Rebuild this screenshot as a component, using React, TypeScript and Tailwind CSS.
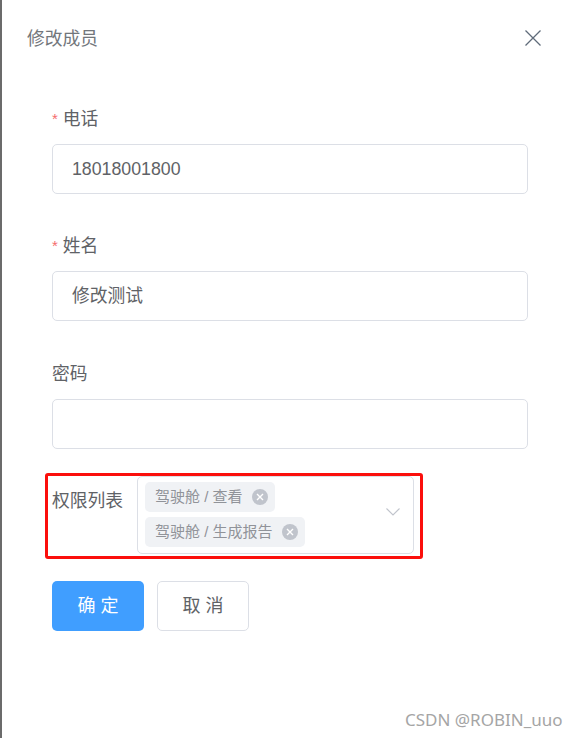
const cjk = "font-['Liberation_Sans','Noto_Sans_CJK_SC',sans-serif]";

function Field({ label, required, value }: { label: string; required?: boolean; value?: string }) {
  return (
    <div className="flex flex-col">
      <div className="flex h-[50px] items-center text-[17.75px] text-[#606266]">
        {required && <span className="mr-[5px] text-[15px] text-[#f56c6c]">*</span>}
        <span>{label}</span>
      </div>
      <div className="flex h-[50px] items-center rounded-[5px] border border-[#dcdfe6] px-[19px] text-[17.75px] text-[#606266]">
        {value}
      </div>
    </div>
  );
}

function Tag({ text }: { text: string }) {
  return (
    <div className="flex h-[30px] items-center self-start rounded-[5px] bg-[#f0f2f5] pl-[10px] pr-[7px] text-[15px] text-[#909399]">
      <span>{text}</span>
      <span className="ml-[9px] flex h-[16px] w-[16px] items-center justify-center rounded-full bg-[#c0c4cc]">
        <svg viewBox="0 0 10 10" className="h-[10px] w-[10px]" fill="none" stroke="#ffffff" strokeWidth="1.4">
          <path d="M2 2 L8 8 M8 2 L2 8" />
        </svg>
      </span>
    </div>
  );
}

export default function App() {
  return (
    <div className={`relative h-[738px] w-[578px] overflow-hidden border-l-2 border-[#6b6b6b] bg-white ${cjk}`}>
      <div className="flex h-[77px] items-center justify-between pl-[25px] pr-[37px]">
        <span className="mt-[1px] text-[17.75px] text-[#72767b]">修改成员</span>
        <svg viewBox="0 0 16 16" className="mb-[1px] h-[16px] w-[16px]" fill="none" stroke="#5f6b7a" strokeWidth="1.3">
          <path d="M0.5 0.5 L15.5 15.5 M15.5 0.5 L0.5 15.5" />
        </svg>
      </div>

      <div className="flex w-[526px] flex-col pl-[50px]">
        <div className="mt-[17px] flex flex-col">
          <Field label="电话" required value="18018001800" />
          <div className="mt-[27px]">
            <Field label="姓名" required value="修改测试" />
          </div>
          <div className="mt-[28px]">
            <Field label="密码" />
          </div>
        </div>

        <div className="mt-[27px] flex">
          <div className="mt-[10px] w-[85px] text-[17.75px] leading-[30px] text-[#606266]">权限列表</div>
          <div className="flex h-[78px] w-[277px] items-start justify-between rounded-[5px] border border-[#dcdfe6] pl-[7px] pr-[13px] pt-[5px]">
            <div className="flex flex-col gap-[5px]">
              <Tag text="驾驶舱 / 查看" />
              <Tag text="驾驶舱 / 生成报告" />
            </div>
            <svg viewBox="0 0 14 8" className="mt-[26px] h-[8px] w-[14px]" fill="none" stroke="#c0c4cc" strokeWidth="1.1">
              <path d="M0.5 0.5 L7 7 L13.5 0.5" />
            </svg>
          </div>
        </div>

        <div className="mt-[27px] flex gap-[13px]">
          <div className="flex h-[50px] w-[92px] items-center justify-center rounded-[5px] bg-[#409eff] pl-[5px] text-[18px] tracking-[5px] text-white">
            确定
          </div>
          <div className="flex h-[50px] w-[92px] items-center justify-center rounded-[5px] border border-[#dcdfe6] pl-[5px] text-[18px] tracking-[5px] text-[#606266]">
            取消
          </div>
        </div>
      </div>

      <div className="absolute left-[43px] top-[473px] h-[86px] w-[378px] rounded-[3px] border-[3px] border-[#fb0f0c]" />
      <div className="absolute left-[403px] top-[708px] font-['Noto_Sans',sans-serif] text-[17px] leading-[24px] text-[#a5a5a5]">
        CSDN @ROBIN_uuo
      </div>
    </div>
  );
}
